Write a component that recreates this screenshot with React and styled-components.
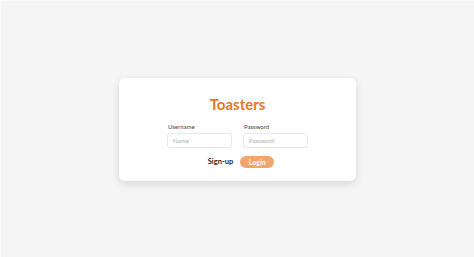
import React from "react";
import styled, { createGlobalStyle } from "styled-components";

const Global = createGlobalStyle`
  html, body { margin: 0; padding: 0; }
  body { background: #f5f5f5; font-family: "Lato", "Liberation Sans", sans-serif; }
`;

const Page = styled.div`
  box-sizing: border-box;
  width: 100vw;
  height: 100vh;
  border-top: 1px solid #fafafa;
  border-left: 1px solid #fafafa;
  display: flex;
  align-items: center;
  justify-content: center;
`;

const Card = styled.div`
  box-sizing: border-box;
  width: 237px;
  height: 103px;
  background: #fff;
  border-radius: 6px;
  box-shadow: 0 3px 8px rgba(0, 0, 0, 0.12);
  padding: 17px 0 12px;
  display: flex;
  flex-direction: column;
  align-items: center;
`;

const Title = styled.h1`
  margin: 0;
  font-size: 15px;
  line-height: 18px;
  font-weight: 700;
  color: #e5772f;
`;

const Fields = styled.div`
  margin-top: 10px;
  display: flex;
  gap: 11px;
`;

const Field = styled.label`
  display: flex;
  flex-direction: column;
  gap: 2px;
`;

const Label = styled.span`
  font-size: 6px;
  line-height: 8px;
  font-weight: 400;
  color: #444;
  padding-left: 1px;
`;

const Input = styled.input`
  box-sizing: border-box;
  width: 65px;
  height: 15px;
  border: 1px solid #e8e8e8;
  border-radius: 3px;
  padding: 0 5px;
  font-family: inherit;
  font-size: 6px;
  outline: none;
  &::placeholder { color: #b0b0b0; }
`;

const Actions = styled.div`
  margin-top: 8px;
  padding-left: 7px;
  display: flex;
  align-items: center;
  gap: 7px;
`;

const TextButton = styled.button`
  border: none;
  background: none;
  padding: 0;
  font-family: inherit;
  font-size: 7.5px;
  font-weight: 700;
  color: #2a2a2a;
`;

const PillButton = styled.button`
  border: none;
  width: 34px;
  height: 12px;
  border-radius: 6px;
  background: #f2a66c;
  color: #fff;
  font-family: inherit;
  font-size: 7px;
  font-weight: 700;
  padding: 0;
`;

export default function App() {
  return (
    <>
      <Global />
      <Page>
        <Card>
          <Title>Toasters</Title>
          <Fields>
            <Field>
              <Label>Username</Label>
              <Input placeholder="Name" />
            </Field>
            <Field>
              <Label>Password</Label>
              <Input type="password" placeholder="Password" />
            </Field>
          </Fields>
          <Actions>
            <TextButton>Sign-up</TextButton>
            <PillButton>Login</PillButton>
          </Actions>
        </Card>
      </Page>
    </>
  );
}
